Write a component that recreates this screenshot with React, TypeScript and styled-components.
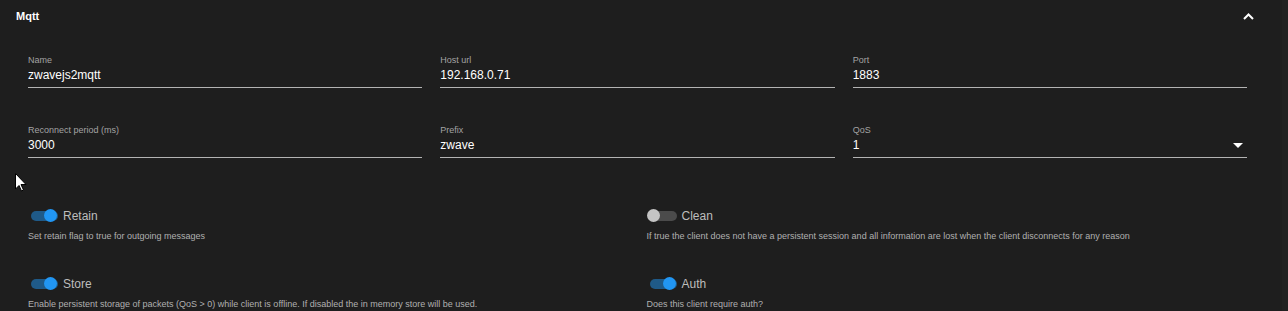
import React from "react";
import styled, { createGlobalStyle } from "styled-components";

const GlobalStyle = createGlobalStyle`
  html, body {
    margin: 0;
    padding: 0;
    background: #1e1e1e;
  }
  body {
    font-family: "Liberation Sans", Arial, sans-serif;
    color: #fff;
  }
`;

const Page = styled.div`
  position: relative;
  width: 1288px;
  height: 311px;
  overflow: hidden;
  background: #1e1e1e;
  border-right: 6px solid #212121;
  box-sizing: border-box;
`;

const PanelHeader = styled.div`
  display: flex;
  align-items: center;
  justify-content: space-between;
  height: 32px;
  padding: 0 28px 0 16px;
`;

const PanelTitle = styled.span`
  font-size: 11px;
  font-weight: 700;
  color: #fff;
`;

const PanelBody = styled.div`
  padding: 22px 26px 0 19px;
`;

const FieldGrid = styled.div`
  display: grid;
  grid-template-columns: repeat(3, 1fr);
  row-gap: 36px;
`;

const Field = styled.div`
  padding: 0 9px;
`;

const FieldLabel = styled.label`
  display: block;
  font-size: 9px;
  line-height: 12px;
  color: #a3a3a3;
`;

const FieldInput = styled.div`
  display: flex;
  align-items: center;
  justify-content: space-between;
  padding: 1px 0 4px;
  border-bottom: 1px solid #b3b3b3;
`;

const FieldValue = styled.span`
  font-size: 12px;
  line-height: 16px;
  color: #fff;
`;

const SwitchGrid = styled.div`
  display: grid;
  grid-template-columns: 1fr 1fr;
  row-gap: 32px;
  margin-top: 48px;
`;

const SwitchItem = styled.div`
  padding: 0 9px;
`;

const SwitchRow = styled.div`
  display: flex;
  align-items: center;
  height: 20px;
  gap: 5px;
`;

const SwitchControl = styled.div<{ $on: boolean }>`
  position: relative;
  width: 30px;
  height: 14px;
  flex: none;

  &::before {
    content: "";
    position: absolute;
    left: 3px;
    top: 2px;
    width: 27px;
    height: 10px;
    border-radius: 5px;
    background: ${({ $on }) => ($on ? "#1f5a88" : "#4b4b4b")};
  }

  &::after {
    content: "";
    position: absolute;
    top: 0;
    left: ${({ $on }) => ($on ? "16px" : "0")};
    width: 13px;
    height: 13px;
    border-radius: 50%;
    background: ${({ $on }) => ($on ? "#2196f3" : "#c4c4c4")};
  }
`;

const SwitchLabel = styled.span`
  font-size: 12px;
  color: #bdbdbd;
`;

const SwitchHint = styled.div`
  margin-top: 4px;
  font-size: 9px;
  line-height: 12px;
  color: #b0b0b0;
  white-space: nowrap;
`;

const Cursor = styled.svg`
  position: absolute;
  left: 15px;
  top: 173px;
`;

const fields = [
  { label: "Name", value: "zwavejs2mqtt" },
  { label: "Host url", value: "192.168.0.71" },
  { label: "Port", value: "1883" },
  { label: "Reconnect period (ms)", value: "3000" },
  { label: "Prefix", value: "zwave" },
  { label: "QoS", value: "1", select: true },
];

const switches = [
  { label: "Retain", on: true, hint: "Set retain flag to true for outgoing messages" },
  {
    label: "Clean",
    on: false,
    hint: "If true the client does not have a persistent session and all information are lost when the client disconnects for any reason",
  },
  {
    label: "Store",
    on: true,
    hint: "Enable persistent storage of packets (QoS > 0) while client is offline. If disabled the in memory store will be used.",
  },
  { label: "Auth", on: true, hint: "Does this client require auth?" },
];

export default function App() {
  return (
    <>
      <GlobalStyle />
      <Page>
        <PanelHeader>
          <PanelTitle>Mqtt</PanelTitle>
          <svg width="11" height="7" viewBox="0 0 11 7">
            <polyline points="1,6 5.5,1.5 10,6" fill="none" stroke="#fff" strokeWidth="2" />
          </svg>
        </PanelHeader>
        <PanelBody>
          <FieldGrid>
            {fields.map((f) => (
              <Field key={f.label}>
                <FieldLabel>{f.label}</FieldLabel>
                <FieldInput>
                  <FieldValue>{f.value}</FieldValue>
                  {f.select && (
                    <svg width="10" height="5" viewBox="0 0 10 5" style={{ marginRight: 4 }}>
                      <polygon points="0,0 10,0 5,5" fill="#fff" />
                    </svg>
                  )}
                </FieldInput>
              </Field>
            ))}
          </FieldGrid>
          <SwitchGrid>
            {switches.map((s) => (
              <SwitchItem key={s.label}>
                <SwitchRow>
                  <SwitchControl $on={s.on} />
                  <SwitchLabel>{s.label}</SwitchLabel>
                </SwitchRow>
                <SwitchHint>{s.hint}</SwitchHint>
              </SwitchItem>
            ))}
          </SwitchGrid>
        </PanelBody>
        <Cursor width="12" height="19" viewBox="0 0 12 19">
          <path d="M0.5,0.5 L0.5,16 L4,12.5 L6.5,18 L8.5,17 L6,11.5 L11,11.5 Z" fill="#fff" stroke="#000" strokeWidth="1" />
        </Cursor>
      </Page>
    </>
  );
}
